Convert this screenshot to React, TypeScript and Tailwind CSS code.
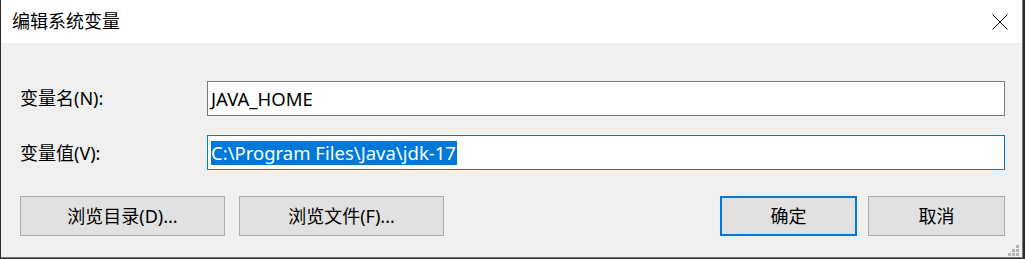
import React from 'react'

const font = { fontFamily: '"Noto Sans", "Noto Sans CJK SC", sans-serif' }

function Button({ label, primary, wide }: { label: string; primary?: boolean; wide?: boolean }) {
  return (
    <button
      className={
        'h-[40px] bg-[#e1e1e1] text-[18px] text-black leading-none ' +
        (wide ? 'w-[205px] ' : 'w-[137px] ') +
        (primary ? 'border-2 border-[#0078d7]' : 'border border-[#adadad]')
      }
    >
      {label}
    </button>
  )
}

export default function App() {
  return (
    <div className="w-[1025px] h-[259px] bg-[#2b2b2b] flex" style={font}>
      {/* 窗口 */}
      <div className="relative ml-[1px] w-[1022px] h-[258px] flex flex-col border-r border-b border-[#7a7a7a] bg-[#f0f0f0]">
        {/* 标题栏 */}
        <div className="h-[43px] bg-white flex items-center justify-between pl-[11px] pr-[14px]">
          <span className="text-[18px] text-black">编辑系统变量</span>
          <svg width="16" height="16" viewBox="0 0 16 16" className="mt-[1px]">
            <path d="M0.5 0.5 L15.5 15.5 M15.5 0.5 L0.5 15.5" stroke="#000" strokeWidth="1" />
          </svg>
        </div>

        {/* 内容 */}
        <div className="flex flex-col pl-[19px] pr-[17px] pt-[38px]">
          <div className="flex items-center">
            <span className="w-[187px] text-[18px] text-black">变量名(N):</span>
            <div className="flex-1 h-[35px] bg-white border border-[#7a7a7a] flex items-center pl-[3px] text-[18.5px] text-black">
              JAVA_HOME
            </div>
          </div>
          <div className="flex items-center mt-[19px]">
            <span className="w-[187px] text-[18px] text-black pt-[2px]">变量值(V):</span>
            <div className="flex-1 h-[35px] bg-white border border-[#0078d7] flex items-center pl-[3px] text-[18.5px]">
              <span className="bg-[#0078d7] text-white leading-[24px] pr-[1px]">C:\Program Files\Java\jdk-17</span>
            </div>
          </div>

          <div className="flex items-center mt-[26px]">
            <div className="flex gap-[14px]">
              <Button label="浏览目录(D)..." wide />
              <Button label="浏览文件(F)..." wide />
            </div>
            <div className="ml-auto flex gap-[11px]">
              <Button label="确定" primary />
              <Button label="取消" />
            </div>
          </div>
        </div>

        {/* 右下角拖拽手柄 */}
        <div className="absolute right-[3px] bottom-[1px] grid grid-cols-3 gap-[1px]">
          <span className="w-[3px] h-[3px]" />
          <span className="w-[3px] h-[3px]" />
          <span className="w-[3px] h-[3px] bg-[#b4b4b4]" />
          <span className="w-[3px] h-[3px]" />
          <span className="w-[3px] h-[3px] bg-[#b4b4b4]" />
          <span className="w-[3px] h-[3px] bg-[#b4b4b4]" />
          <span className="w-[3px] h-[3px] bg-[#b4b4b4]" />
          <span className="w-[3px] h-[3px] bg-[#b4b4b4]" />
          <span className="w-[3px] h-[3px] bg-[#b4b4b4]" />
        </div>
      </div>
    </div>
  )
}
